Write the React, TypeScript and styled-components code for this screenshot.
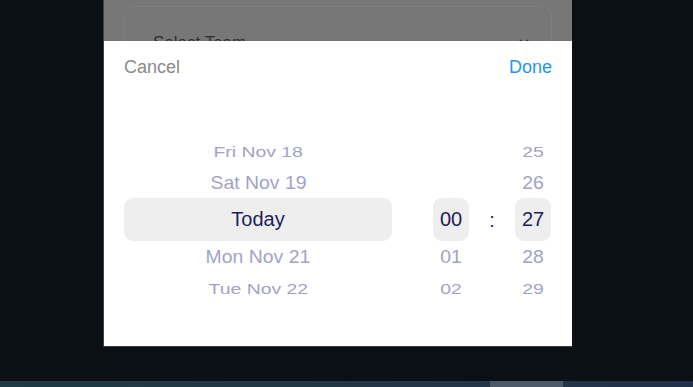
import styled, { createGlobalStyle } from "styled-components";

const GlobalStyle = createGlobalStyle`
  html, body {
    margin: 0;
    padding: 0;
    background: #0b1014;
    font-family: "Liberation Sans", Arial, sans-serif;
  }
`;

const Screen = styled.div`
  width: 693px;
  height: 387px;
  display: flex;
  flex-direction: column;
  overflow: hidden;
  background: #0b1014;
`;

const Stage = styled.div`
  flex: 1;
  padding-left: 103px;
`;

const Phone = styled.div`
  width: 468px;
  height: 346px;
  display: flex;
  flex-direction: column;
  border-left: 1px solid #3c4044;
  border-bottom: 1px solid #3a3d40;
`;

const Backdrop = styled.div`
  height: 41px;
  background: #777777;
  padding: 6px 20px 0 20px;
  overflow: hidden;
  box-sizing: border-box;
`;

const DimmedCard = styled.div`
  height: 80px;
  border: 1px solid #7e7e7e;
  border-radius: 10px;
  display: flex;
  justify-content: space-between;
  padding: 26px 22px 0 28px;
  box-sizing: border-box;
  font-size: 17px;
  color: #2e2e2e;
`;

const Chevron = styled.svg`
  margin-top: 6px;
  width: 10px;
  height: 7px;
`;

const Sheet = styled.div`
  flex: 1;
  background: #ffffff;
  padding: 0 20px 0 20px;
  display: flex;
  flex-direction: column;
`;

const Header = styled.div`
  height: 52px;
  display: flex;
  align-items: center;
  justify-content: space-between;
  font-size: 18px;
`;

const HeaderButton = styled.span<{ $primary?: boolean }>`
  color: ${(p) => (p.$primary ? "#2196f3" : "#8a8a8a")};
  cursor: pointer;
`;

const Picker = styled.div`
  margin-top: 43px;
  display: flex;
  align-items: flex-start;
`;

const Wheel = styled.div<{ $width: number }>`
  width: ${(p) => p.$width}px;
  display: flex;
  flex-direction: column;
`;

const Separator = styled.div`
  width: 46px;
  height: 169px;
  display: flex;
  align-items: center;
  justify-content: center;
  font-size: 20px;
  color: #1e1e5c;
`;

const Spacer = styled.div`
  width: 41px;
`;

const sizes = [32, 30, 43, 32, 32];
const scales = [0.75, 0.92, 1, 0.92, 0.75];

const Item = styled.div<{ $slot: number; $blank?: boolean }>`
  height: ${(p) => sizes[p.$slot]}px;
  display: flex;
  align-items: center;
  justify-content: center;
  font-size: 20px;
  border-radius: 9px;
  color: ${(p) => (p.$slot === 2 ? "#1e1e5c" : "#a3a2c6")};
  background: ${(p) => (p.$slot === 2 && !p.$blank ? "#eeeeee" : "transparent")};
`;

const Label = styled.span<{ $slot: number }>`
  display: inline-block;
  transform: scale(${(p) => (p.$slot === 2 ? 1 : 0.97)}, ${(p) => scales[p.$slot]});
`;

const BottomBar = styled.div`
  height: 6px;
  display: flex;
  background: linear-gradient(90deg, #1f3a42 0%, #22364a 70%, #213048 100%);
`;

const BarGap = styled.div`
  width: 490px;
`;

const BarThumb = styled.div`
  width: 73px;
  background: #4b5a66;
`;

const days = ["Fri Nov 18", "Sat Nov 19", "Today", "Mon Nov 21", "Tue Nov 22"];
const hours = ["", "", "00", "01", "02"];
const minutes = ["25", "26", "27", "28", "29"];

const renderWheel = (values: string[], width: number) => (
  <Wheel $width={width}>
    {values.map((v, i) => (
      <Item key={i} $slot={i} $blank={v === ""}>
        <Label $slot={i}>{v}</Label>
      </Item>
    ))}
  </Wheel>
);

export default function App() {
  return (
    <Screen>
      <GlobalStyle />
      <Stage>
        <Phone>
          <Backdrop>
            <DimmedCard>
              <span>Select Team</span>
              <Chevron viewBox="0 0 10 7">
                <path d="M1 1 L5 5 L9 1" fill="none" stroke="#333" strokeWidth="1.6" />
              </Chevron>
            </DimmedCard>
          </Backdrop>
          <Sheet>
            <Header>
              <HeaderButton>Cancel</HeaderButton>
              <HeaderButton $primary>Done</HeaderButton>
            </Header>
            <Picker>
              {renderWheel(days, 268)}
              <Spacer />
              {renderWheel(hours, 36)}
              <Separator>:</Separator>
              {renderWheel(minutes, 36)}
            </Picker>
          </Sheet>
        </Phone>
      </Stage>
      <BottomBar>
        <BarGap />
        <BarThumb />
      </BottomBar>
    </Screen>
  );
}
